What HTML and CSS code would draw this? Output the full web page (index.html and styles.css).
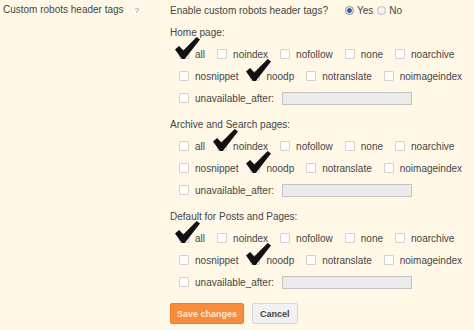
FILE: index.html
```html
<!DOCTYPE html>
<html lang="en">
<head>
    <meta charset="UTF-8">
    <title>Custom robots header tags</title>
    <link rel="stylesheet" href="styles.css">
</head>
<body>
    <div class="setting">
        <div class="setting-label">Custom robots header tags <span class="help">?</span></div>
        <div class="setting-body">
            <div class="enable-row">
                Enable custom robots header tags?
                <span class="radios">
                    <span class="radio checked"></span><span class="radio-text">Yes</span>
                    <span class="radio"></span><span class="radio-text">No</span>
                </span>
            </div>

            <!-- Home page -->
            <div class="group">
                <div class="group-title">Home page:</div>
                <div class="opt-row">
                    <span class="opt"><span class="cb checked"><svg class="tick" viewBox="0 0 24 21"><path d="M0 12 L4 8.6 L8 13 L20.8 0 L24 2.4 L9.4 21 L6.6 21 Z"/></svg></span>all</span>
                    <span class="opt"><span class="cb"></span>noindex</span>
                    <span class="opt"><span class="cb"></span>nofollow</span>
                    <span class="opt"><span class="cb"></span>none</span>
                    <span class="opt"><span class="cb"></span>noarchive</span>
                </div>
                <div class="opt-row">
                    <span class="opt"><span class="cb"></span>nosnippet</span>
                    <span class="opt"><span class="cb checked"><svg class="tick" viewBox="0 0 24 21"><path d="M0 12 L4 8.6 L8 13 L20.8 0 L24 2.4 L9.4 21 L6.6 21 Z"/></svg></span>noodp</span>
                    <span class="opt"><span class="cb"></span>notranslate</span>
                    <span class="opt"><span class="cb"></span>noimageindex</span>
                </div>
                <div class="opt-row">
                    <span class="opt"><span class="cb"></span>unavailable_after:</span>
                    <span class="date-input"></span>
                </div>
            </div>

            <!-- Archive and Search pages -->
            <div class="group">
                <div class="group-title">Archive and Search pages:</div>
                <div class="opt-row">
                    <span class="opt"><span class="cb"></span>all</span>
                    <span class="opt"><span class="cb checked"><svg class="tick" viewBox="0 0 24 21"><path d="M0 12 L4 8.6 L8 13 L20.8 0 L24 2.4 L9.4 21 L6.6 21 Z"/></svg></span>noindex</span>
                    <span class="opt"><span class="cb"></span>nofollow</span>
                    <span class="opt"><span class="cb"></span>none</span>
                    <span class="opt"><span class="cb"></span>noarchive</span>
                </div>
                <div class="opt-row">
                    <span class="opt"><span class="cb"></span>nosnippet</span>
                    <span class="opt"><span class="cb checked"><svg class="tick" viewBox="0 0 24 21"><path d="M0 12 L4 8.6 L8 13 L20.8 0 L24 2.4 L9.4 21 L6.6 21 Z"/></svg></span>noodp</span>
                    <span class="opt"><span class="cb"></span>notranslate</span>
                    <span class="opt"><span class="cb"></span>noimageindex</span>
                </div>
                <div class="opt-row">
                    <span class="opt"><span class="cb"></span>unavailable_after:</span>
                    <span class="date-input"></span>
                </div>
            </div>

            <!-- Default for Posts and Pages -->
            <div class="group">
                <div class="group-title">Default for Posts and Pages:</div>
                <div class="opt-row">
                    <span class="opt"><span class="cb checked"><svg class="tick" viewBox="0 0 24 21"><path d="M0 12 L4 8.6 L8 13 L20.8 0 L24 2.4 L9.4 21 L6.6 21 Z"/></svg></span>all</span>
                    <span class="opt"><span class="cb"></span>noindex</span>
                    <span class="opt"><span class="cb"></span>nofollow</span>
                    <span class="opt"><span class="cb"></span>none</span>
                    <span class="opt"><span class="cb"></span>noarchive</span>
                </div>
                <div class="opt-row">
                    <span class="opt"><span class="cb"></span>nosnippet</span>
                    <span class="opt"><span class="cb checked"><svg class="tick" viewBox="0 0 24 21"><path d="M0 12 L4 8.6 L8 13 L20.8 0 L24 2.4 L9.4 21 L6.6 21 Z"/></svg></span>noodp</span>
                    <span class="opt"><span class="cb"></span>notranslate</span>
                    <span class="opt"><span class="cb"></span>noimageindex</span>
                </div>
                <div class="opt-row">
                    <span class="opt"><span class="cb"></span>unavailable_after:</span>
                    <span class="date-input"></span>
                </div>
            </div>

            <div class="actions">
                <button class="btn btn-save">Save changes</button>
                <button class="btn btn-cancel">Cancel</button>
            </div>
        </div>
    </div>
</body>
</html>
```

FILE: styles.css
```css
body {
    font-family: 'Liberation Sans', Arial, sans-serif;
    font-size: 10px;
    color: #454545;
    background-color: #fff8e7;
    margin: 0;
    padding: 0;
}
.setting {
    display: flex;
}
.setting-label {
    width: 170px;
    padding-left: 3px;
    line-height: 20px;
}
.help {
    margin-left: 8px;
    font-size: 8px;
    color: #7d8bc4;
}
.setting-body {
    flex: 1;
}
.enable-row {
    display: flex;
    align-items: center;
    height: 20px;
    margin-bottom: 2px;
}
.radios {
    display: flex;
    align-items: center;
    margin-left: 17px;
}
.radio {
    width: 7px;
    height: 7px;
    border: 1px solid #b9b9b9;
    border-radius: 50%;
    background-color: #f4f4f4;
    margin-right: 3px;
}
.radio.checked {
    border-color: #8a8a8a;
    background: radial-gradient(circle, #2f5f9e 0, #2f5f9e 2px, #e8eef6 2.6px);
}
.radio-text {
    margin-right: 4px;
}
.group {
    margin-bottom: 5px;
}
.group-title {
    line-height: 21px;
}
.opt-row {
    display: flex;
    align-items: center;
    height: 22px;
    padding-left: 9px;
}
.opt {
    display: flex;
    align-items: center;
    margin-right: 12px;
}
.cb {
    position: relative;
    width: 8px;
    height: 8px;
    border: 1px solid #d2d2d2;
    border-radius: 1px;
    background-color: #fdfdfb;
    margin-right: 6px;
}
.tick {
    position: absolute;
    left: -5px;
    top: -13px;
    width: 25px;
    height: 22px;
    fill: #111;
}
.date-input {
    width: 128px;
    height: 11px;
    margin-left: -4px;
    border: 1px solid #c4c4c4;
    background-color: #ebebeb;
}
.actions {
    display: flex;
    gap: 8px;
    margin-top: 10px;
}
.btn {
    height: 21px;
    padding: 0 6px;
    font-family: 'Liberation Sans', Arial, sans-serif;
    font-size: 9px;
    font-weight: bold;
    border-radius: 2px;
}
.btn-save {
    background-color: #f78c3b;
    border: 1px solid #ea7e2e;
    color: #fde6cf;
}
.btn-cancel {
    padding: 0 7px;
    background-color: #f1f1f1;
    border: 1px solid #d8d8d8;
    color: #444;
}
```
